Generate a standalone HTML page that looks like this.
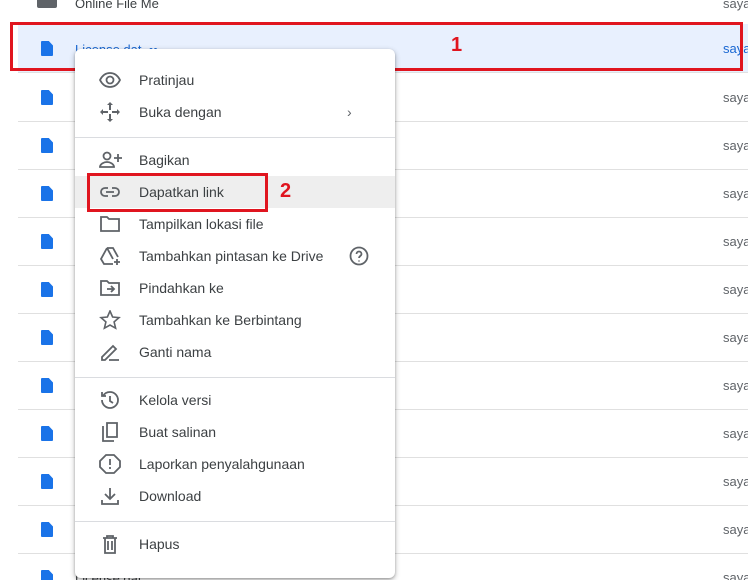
<!DOCTYPE html><html><head><style>
html,body{margin:0;width:748px;height:580px;overflow:hidden;background:#fff;font-family:"Liberation Sans",sans-serif;position:relative}
.row{position:absolute;left:18px;width:730px;height:48px;border-bottom:1px solid #e0e0e0}
.fi{position:absolute;left:23px;top:17px;width:12px;height:15px;background:#1a73e8;clip-path:polygon(0 0,65% 0,100% 30%,100% 100%,0 100%);border-radius:1px}
.saya{position:absolute;left:705px;top:17px;font-size:13px;color:#5f6368}
.menu{position:absolute;left:75px;top:49px;width:320px;height:529px;background:#fff;border-radius:6px;box-shadow:0 2px 6px rgba(0,0,0,.3),0 1px 2px rgba(0,0,0,.2)}
.it{position:absolute;left:0;width:320px;height:32px;font-size:14px;color:#3c4043;line-height:32px}
.it span{position:absolute;left:64px}
.it svg{position:absolute;left:24px;top:6px}
.sep{position:absolute;left:0;width:320px;border-top:1px solid #dadce0}
.red{position:absolute;border:3px solid #e0151f}
.num{position:absolute;color:#e0151f;font-weight:bold;font-size:20px}
</style></head><body>
<div style="position:absolute;left:37px;top:-6px;width:20px;height:14px;background:#5f6368;border-radius:2px"></div>
<div style="position:absolute;left:75px;top:-4px;font-size:13px;color:#3c4043">Online File Me</div>
<div style="position:absolute;left:723px;top:-4px;font-size:13px;color:#5f6368">saya</div>
<div class="row" style="top:24px;background:#e8f0fe"><div class="fi"></div><div style="position:absolute;left:57px;top:18px;font-size:13px;color:#1967d2">License.dat &nbsp;••</div><div class="saya" style="color:#1967d2">saya</div></div>
<div class="row" style="top:73px"><div class="fi"></div><div class="saya">saya</div></div>
<div class="row" style="top:121px"><div class="fi"></div><div class="saya">saya</div></div>
<div class="row" style="top:169px"><div class="fi"></div><div class="saya">saya</div></div>
<div class="row" style="top:217px"><div class="fi"></div><div class="saya">saya</div></div>
<div class="row" style="top:265px"><div class="fi"></div><div class="saya">saya</div></div>
<div class="row" style="top:313px"><div class="fi"></div><div class="saya">saya</div></div>
<div class="row" style="top:361px"><div class="fi"></div><div class="saya">saya</div></div>
<div class="row" style="top:409px"><div class="fi"></div><div class="saya">saya</div></div>
<div class="row" style="top:457px"><div class="fi"></div><div class="saya">saya</div></div>
<div class="row" style="top:505px"><div class="fi"></div><div class="saya">saya</div></div>
<div class="row" style="top:553px"><div class="fi"></div><div style="position:absolute;left:57px;top:18px;font-size:13px;color:#3c4043">License.dat</div><div class="saya">saya</div></div>
<div class="red" style="left:10px;top:22px;width:727px;height:43px"></div>
<div class="num" style="left:451px;top:34px">1</div>
<div class="menu">
<div class="it" style="top:15px"><svg width="22" height="20" viewBox="0 0 22 20" fill="none" stroke="#5f6368" stroke-width="1.8"><path d="M1 10C4 4 8 3 11 3s7 1 10 7c-3 6-7 7-10 7S4 16 1 10z"/><circle cx="11" cy="10" r="3.5"/></svg><span>Pratinjau</span></div>
<div class="it" style="top:47px"><svg width="22" height="20" viewBox="0 0 22 20" fill="#5f6368"><path d="M11 0l3 3h-2v5h-2V3H8zM11 20l-3-3h2v-5h2v5h2zM1 10l3-3v2h5v2H4v2zM21 10l-3 3v-2h-5V9h5V7z"/></svg><span>Buka dengan</span><b style="position:absolute;left:272px;font-weight:normal;color:#5f6368">›</b></div>
<div class="sep" style="top:88px"></div>
<div class="it" style="top:95px"><svg width="24" height="20" viewBox="0 0 24 20" fill="none" stroke="#5f6368" stroke-width="1.8"><circle cx="8" cy="6" r="3.5"/><path d="M1 17c0-3 4-5 7-5s7 2 7 5zM19 4v8M15 8h8"/></svg><span>Bagikan</span></div>
<div class="it" style="top:127px;background:#eeeeee"><svg width="22" height="20" viewBox="0 0 22 20" fill="none" stroke="#5f6368" stroke-width="1.8"><path d="M9 6H6a4 4 0 000 8h3M13 6h3a4 4 0 010 8h-3M7 10h8"/></svg><span>Dapatkan link</span></div>
<div class="it" style="top:159px"><svg width="22" height="20" viewBox="0 0 22 20" fill="none" stroke="#5f6368" stroke-width="1.8"><path d="M2 3h6l2 2h10v12H2z"/></svg><span>Tampilkan lokasi file</span></div>
<div class="it" style="top:191px"><svg width="24" height="20" viewBox="0 0 24 20" fill="none" stroke="#5f6368" stroke-width="1.8"><path d="M8 2h6l5 9M8 2L2 13l3 5h9M8 2l6 11M18 13v6M15 16h6"/></svg><span>Tambahkan pintasan ke Drive</span><svg style="left:273px" width="22" height="20" viewBox="0 0 22 20" fill="none" stroke="#5f6368" stroke-width="1.8"><circle cx="11" cy="10" r="8.5"/><path d="M8.5 8a2.5 2.5 0 115 0c0 2-2.5 2-2.5 4M11 14.5v1"/></svg></div>
<div class="it" style="top:223px"><svg width="22" height="20" viewBox="0 0 22 20" fill="none" stroke="#5f6368" stroke-width="1.8"><path d="M2 3h6l2 2h10v12H2zM8 11h7M12 8l3 3-3 3"/></svg><span>Pindahkan ke</span></div>
<div class="it" style="top:255px"><svg width="22" height="20" viewBox="0 0 22 20" fill="none" stroke="#5f6368" stroke-width="1.6"><path d="M11 1l2.6 6 6.4.6-4.9 4.3 1.5 6.3L11 15l-5.6 3.2 1.5-6.3L2 7.6 8.4 7z"/></svg><span>Tambahkan ke Berbintang</span></div>
<div class="it" style="top:287px"><svg width="22" height="20" viewBox="0 0 22 20" fill="none" stroke="#5f6368" stroke-width="1.8"><path d="M3 18v-3L14 4l3 3L6 18zM10 18h10"/></svg><span>Ganti nama</span></div>
<div class="sep" style="top:328px"></div>
<div class="it" style="top:335px"><svg width="22" height="20" viewBox="0 0 22 20" fill="none" stroke="#5f6368" stroke-width="1.8"><path d="M3 10a8 8 0 108-8 8 8 0 00-7 4M3 2v4h4M11 6v5l3 2"/></svg><span>Kelola versi</span></div>
<div class="it" style="top:367px"><svg width="22" height="22" viewBox="0 0 22 22" fill="none" stroke="#5f6368" stroke-width="1.8"><path d="M4 4v15h11M8 1h10v14H8z"/></svg><span>Buat salinan</span></div>
<div class="it" style="top:399px"><svg width="22" height="20" viewBox="0 0 22 20" fill="none" stroke="#5f6368" stroke-width="1.8"><path d="M7 1h8l6 6v6l-6 6H7l-6-6V7zM11 5v6M11 13v2"/></svg><span>Laporkan penyalahgunaan</span></div>
<div class="it" style="top:431px"><svg width="22" height="20" viewBox="0 0 22 20" fill="none" stroke="#5f6368" stroke-width="1.8"><path d="M11 2v11M6 8l5 5 5-5M3 14v4h16v-4"/></svg><span>Download</span></div>
<div class="sep" style="top:472px"></div>
<div class="it" style="top:479px"><svg width="22" height="20" viewBox="0 0 22 20" fill="none" stroke="#5f6368" stroke-width="1.8"><path d="M4 4h14M8 4V2h6v2M6 4v15h10V4M9 7v9M13 7v9"/></svg><span>Hapus</span></div>
</div>
<div class="red" style="left:87px;top:173px;width:175px;height:33px"></div>
<div class="num" style="left:280px;top:180px">2</div>
</body></html>
